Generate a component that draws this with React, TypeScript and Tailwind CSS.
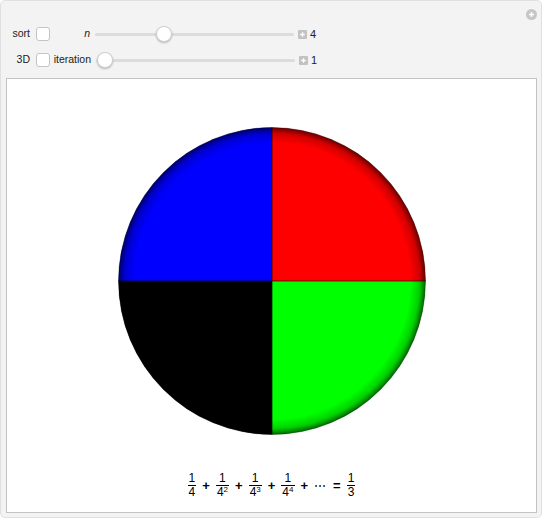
import React from "react";

const font = { fontFamily: '"Liberation Sans", Arial, sans-serif' };

function Checkbox() {
  return <div className="w-[14px] h-[14px] rounded-[3px] border border-[#c4c4c4] bg-white shrink-0" />;
}

function Slider({ thumb }: { thumb: string }) {
  return (
    <div className="relative w-[199px] h-[16px] flex items-center shrink-0">
      <div className="w-full h-[3px] rounded-full bg-[#dcdcdc]" />
      <div
        className={`absolute top-0 w-[16px] h-[16px] rounded-full bg-white border border-[#d0d0d0] shadow-[0_1px_2px_rgba(0,0,0,0.25)] ${thumb}`}
      />
    </div>
  );
}

function PlusBox() {
  return (
    <div className="w-[9px] h-[9px] bg-[#c2c2c2] rounded-[1px] flex items-center justify-center shrink-0">
      <svg width="7" height="7" viewBox="0 0 7 7">
        <path d="M3.5 1.2V5.8M1.2 3.5H5.8" stroke="white" strokeWidth="1.3" />
      </svg>
    </div>
  );
}

function Frac({ num, den, exp }: { num: string; den: string; exp?: string }) {
  return (
    <div className="flex flex-col items-center leading-none">
      <span className="px-[1px] leading-[11px]">{num}</span>
      <div className="h-px w-full bg-black my-[1px]" />
      <div className="px-[1px] flex items-start">
        <span className="leading-[11px]">{den}</span>
        {exp && <span className="text-[8px] leading-[8px] -mt-[1px]">{exp}</span>}
      </div>
    </div>
  );
}

function Pie() {
  const c = 155;
  const r = 153.5;
  return (
    <svg width="310" height="310" viewBox="0 0 310 310">
      <defs>
        <radialGradient id="rim" cx="0.5" cy="0.5" r="0.5">
          <stop offset="0.9" stopColor="#000" stopOpacity="0" />
          <stop offset="0.96" stopColor="#000" stopOpacity="0.18" />
          <stop offset="1" stopColor="#000" stopOpacity="0.6" />
        </radialGradient>
      </defs>
      <path d={`M${c} ${c}L${c - r} ${c}A${r} ${r} 0 0 1 ${c} ${c - r}Z`} fill="#0000ff" />
      <path d={`M${c} ${c}L${c} ${c - r}A${r} ${r} 0 0 1 ${c + r} ${c}Z`} fill="#ff0000" />
      <path d={`M${c} ${c}L${c + r} ${c}A${r} ${r} 0 0 1 ${c} ${c + r}Z`} fill="#00ff00" />
      <path d={`M${c} ${c}L${c} ${c + r}A${r} ${r} 0 0 1 ${c - r} ${c}Z`} fill="#000000" />
      <circle cx={c} cy={c} r={r} fill="url(#rim)" />
      <path d={`M${c} ${c - r}V${c + r}M${c - r} ${c}H${c + r}`} stroke="#000" strokeOpacity="0.75" strokeWidth="0.9" />
      <circle cx={c} cy={c} r={r} fill="none" stroke="#000" strokeOpacity="0.5" strokeWidth="0.6" />
    </svg>
  );
}

export default function App() {
  return (
    <div className="w-[544px] h-[520px] bg-white" style={font}>
      <div className="relative w-[542px] h-[518px] bg-[#f3f3f3] border border-[#e0e0e0] rounded-[5px] flex flex-col">
        <div className="absolute top-[8px] right-[4px] w-[11px] h-[11px] rounded-full bg-[#c6c6c6] flex items-center justify-center">
          <svg width="7" height="7" viewBox="0 0 7 7">
            <path d="M3.5 1V6M1 3.5H6" stroke="white" strokeWidth="1.4" />
          </svg>
        </div>

        <div className="flex flex-col gap-[6px] pt-[23px] text-[10.5px] text-[#222]">
          <div className="flex items-center h-[20px]">
            <span className="w-[29px] text-right">sort</span>
            <div className="ml-[6px]"><Checkbox /></div>
            <span className="w-[40px] text-right italic">n</span>
            <div className="ml-[5px]"><Slider thumb="left-[61px]" /></div>
            <div className="ml-[4px]"><PlusBox /></div>
            <span className="ml-[3px] text-[11px]">4</span>
          </div>
          <div className="flex items-center h-[20px]">
            <span className="w-[29px] text-right">3D</span>
            <div className="ml-[6px]"><Checkbox /></div>
            <span className="w-[41px] text-right">iteration</span>
            <div className="ml-[5px]"><Slider thumb="left-[1px]" /></div>
            <div className="ml-[4px]"><PlusBox /></div>
            <span className="ml-[3px] text-[11px]">1</span>
          </div>
        </div>

        <div className="ml-[5px] mt-[8px] w-[531px] h-[435px] bg-white border border-[#c3c3c3] flex flex-col items-center">
          <div className="mt-[47px]"><Pie /></div>
          <div className="mt-[37px] flex items-center gap-[6px] text-[12px] text-black">
            <Frac num="1" den="4" />
            <span className="font-bold text-[13px]">+</span>
            <Frac num="1" den="4" exp="2" />
            <span className="font-bold text-[13px]">+</span>
            <Frac num="1" den="4" exp="3" />
            <span className="font-bold text-[13px]">+</span>
            <Frac num="1" den="4" exp="4" />
            <span className="font-bold text-[13px]">+</span>
            <span className="tracking-[1px]">⋯</span>
            <span className="font-bold text-[13px]">=</span>
            <Frac num="1" den="3" />
          </div>
        </div>
      </div>
    </div>
  );
}
